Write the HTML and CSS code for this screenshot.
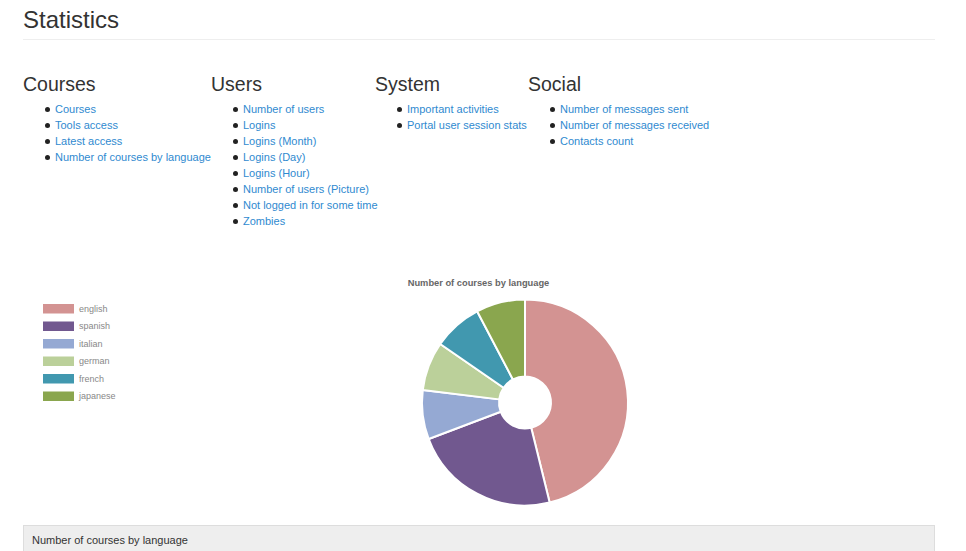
FILE: index.html
```html
<!DOCTYPE html>
<html>
<head>
<meta charset="utf-8">
<link rel="stylesheet" href="styles.css">
</head>
<body>
<div class="page">
  <h1 class="title">Statistics</h1>
  <div class="sections">
    <div class="section courses">
      <h2>Courses</h2>
      <ul>
        <li><a href="#">Courses</a></li>
        <li><a href="#">Tools access</a></li>
        <li><a href="#">Latest access</a></li>
        <li><a href="#">Number of courses by language</a></li>
      </ul>
    </div>
    <div class="section users">
      <h2>Users</h2>
      <ul>
        <li><a href="#">Number of users</a></li>
        <li><a href="#">Logins</a></li>
        <li><a href="#">Logins (Month)</a></li>
        <li><a href="#">Logins (Day)</a></li>
        <li><a href="#">Logins (Hour)</a></li>
        <li><a href="#">Number of users (Picture)</a></li>
        <li><a href="#">Not logged in for some time</a></li>
        <li><a href="#">Zombies</a></li>
      </ul>
    </div>
    <div class="section system">
      <h2>System</h2>
      <ul>
        <li><a href="#">Important activities</a></li>
        <li><a href="#">Portal user session stats</a></li>
      </ul>
    </div>
    <div class="section social">
      <h2>Social</h2>
      <ul>
        <li><a href="#">Number of messages sent</a></li>
        <li><a href="#">Number of messages received</a></li>
        <li><a href="#">Contacts count</a></li>
      </ul>
    </div>
  </div>
  <svg class="chart" width="912" height="275" viewBox="0 0 912 275">
    <text class="chart-title" x="455.5" y="45.5" text-anchor="middle">Number of courses by language</text>
    <g class="legend">
      <rect x="20" y="64" width="31" height="9.5" fill="#d39392"/>
      <text x="56" y="71.5">english</text>
      <rect x="20" y="81.5" width="31" height="9.5" fill="#71588f"/>
      <text x="56" y="89">spanish</text>
      <rect x="20" y="99" width="31" height="9.5" fill="#95a9d3"/>
      <text x="56" y="106.5">italian</text>
      <rect x="20" y="116.5" width="31" height="9.5" fill="#bbd09a"/>
      <text x="56" y="124">german</text>
      <rect x="20" y="134" width="31" height="9.5" fill="#4198af"/>
      <text x="56" y="141.5">french</text>
      <rect x="20" y="151.5" width="31" height="9.5" fill="#8aa64e"/>
      <text x="56" y="159">japanese</text>
    </g>
    <g class="pie">
      <path fill="#d39392" d="M502,59.5 A103,103 0 0 1 526.65,262.5 L508.22,187.74 A26,26 0 0 0 502,136.5 Z"/>
      <path fill="#71588f" d="M526.65,262.5 A103,103 0 0 1 405.69,199.02 L477.69,171.72 A26,26 0 0 0 508.22,187.74 Z"/>
      <path fill="#95a9d3" d="M405.69,199.02 A103,103 0 0 1 399.75,150.08 L476.19,159.37 A26,26 0 0 0 477.69,171.72 Z"/>
      <path fill="#bbd09a" d="M399.75,150.08 A103,103 0 0 1 417.23,103.99 L480.6,147.73 A26,26 0 0 0 476.19,159.37 Z"/>
      <path fill="#4198af" d="M417.23,103.99 A103,103 0 0 1 454.13,71.3 L489.92,139.48 A26,26 0 0 0 480.6,147.73 Z"/>
      <path fill="#8aa64e" d="M454.13,71.3 A103,103 0 0 1 502,59.5 L502,136.5 A26,26 0 0 0 489.92,139.48 Z"/>
    </g>
  </svg>
  <div class="panel">Number of courses by language</div>
</div>
</body>
</html>
```
FILE: styles.css
```css
html, body {
  margin: 0;
  padding: 0;
  background: #fff;
}
body {
  font-family: "Liberation Sans", Arial, sans-serif;
  color: #333;
  font-size: 11px;
}
.page {
  width: 912px;
  margin: 0 0 0 23px;
}
.title {
  margin: 0;
  padding: 7px 0 6px;
  font-size: 24px;
  line-height: 26px;
  font-weight: normal;
  color: #333;
  border-bottom: 1px solid #eee;
}
.sections {
  display: flex;
  align-items: flex-start;
  margin-top: 33px;
}
.section {
  flex: none;
}
.section.courses { width: 188px; }
.section.users { width: 164px; }
.section.system { width: 153px; }
.section h2 {
  margin: 0 0 6px;
  font-size: 19.5px;
  line-height: 22px;
  font-weight: normal;
  color: #333;
}
.section ul {
  margin: 0;
  padding-left: 32px;
  list-style: none;
}
.section li {
  line-height: 16px;
  font-size: 11px;
  white-space: nowrap;
}
.section li::before {
  content: "";
  display: inline-block;
  width: 5px;
  height: 5px;
  border-radius: 50%;
  background: #222;
  margin-left: -10.5px;
  margin-right: 5.5px;
  vertical-align: 1px;
}
.section a {
  color: #2f8ad0;
  text-decoration: none;
}
.chart {
  display: block;
  margin-top: 11px;
}
.chart-title {
  font-family: "Liberation Sans", Arial, sans-serif;
  font-size: 9.3px;
  font-weight: bold;
  fill: #666;
}
.legend text {
  font-family: "Liberation Sans", Arial, sans-serif;
  font-size: 9px;
  fill: #888;
}
.pie path {
  stroke: #fff;
  stroke-width: 2;
  stroke-linejoin: round;
}
.panel {
  margin-top: 10px;
  background: #eee;
  border: 1px solid #ddd;
  padding: 7px 8px 12px;
  line-height: 15px;
  font-size: 11px;
  color: #333;
}
```
